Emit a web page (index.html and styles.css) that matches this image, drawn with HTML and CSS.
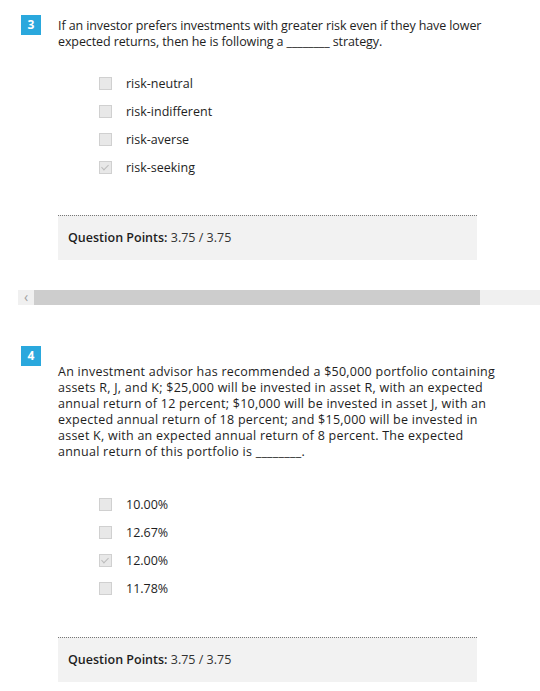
FILE: index.html
```
<!DOCTYPE html>
<html lang="en">
<head>
  <meta charset="UTF-8">
  <meta name="viewport" content="width=device-width, initial-scale=1.0">
  <title>quiz</title>
  <link rel="stylesheet" href="styles.css">
</head>
<body>
  <div class="question q3">
    <div class="q-head">
      <span class="num">3</span>
      <div class="q-text">If an investor prefers investments with greater risk even if they have lower<br>expected returns, then he is following a ________ strategy.</div>
    </div>
    <ul class="answers">
      <li><span class="box"></span>risk-neutral</li>
      <li><span class="box"></span>risk-indifferent</li>
      <li><span class="box"></span>risk-averse</li>
      <li><span class="box checked"></span>risk-seeking</li>
    </ul>
    <div class="points"><b>Question Points:</b> 3.75 / 3.75</div>
  </div>

  <div class="hscroll">
    <span class="arrow">&#8249;</span>
    <span class="thumb"></span>
  </div>

  <div class="question q4">
    <div class="q-head">
      <span class="num">4</span>
    </div>
    <div class="q-text body">An investment advisor has recommended a $50,000 portfolio containing<br>assets R, J, and K; $25,000 will be invested in asset R, with an expected<br>annual return of 12 percent; $10,000 will be invested in asset J, with an<br>expected annual return of 18 percent; and $15,000 will be invested in<br>asset K, with an expected annual return of 8 percent. The expected<br>annual return of this portfolio is ________.</div>
    <ul class="answers">
      <li><span class="box"></span>10.00%</li>
      <li><span class="box"></span>12.67%</li>
      <li><span class="box checked"></span>12.00%</li>
      <li><span class="box"></span>11.78%</li>
    </ul>
    <div class="points"><b>Question Points:</b> 3.75 / 3.75</div>
  </div>
</body>
</html>
```

FILE: styles.css
```
body {
    margin: 0;
    font-family: "Open Sans", sans-serif;
    font-size: 12.5px;
    color: #1e1e1e;
    background: #fff;
}

.question {
    padding-left: 21px;
}
.q3 {
    padding-top: 15px;
}
.q4 {
    padding-top: 41px;
}

.q-head {
    display: flex;
    align-items: flex-start;
}

.num {
    flex: none;
    width: 20px;
    height: 20px;
    line-height: 20px;
    text-align: center;
    background-color: #2aa8dd;
    color: #fff;
    font-weight: bold;
    font-size: 12px;
    margin-right: 17px;
}

.q-text {
    width: 470px;
    line-height: 16px;
    margin-top: 3px;
    letter-spacing: -0.1px;
}
.q-text.body {
    margin-left: 37px;
    margin-top: -2px;
    letter-spacing: 0.25px;
}

.answers {
    list-style: none;
    margin: 0;
    padding: 19px 0 0 78px;
}
.answers li {
    display: flex;
    align-items: center;
    height: 28px;
}
.q4 .answers {
    padding-top: 30px;
}

.box {
    display: inline-block;
    width: 11px;
    height: 11px;
    border: 1px solid #d0d0d0;
    background-color: #e8e8e8;
    margin-right: 14px;
    position: relative;
}
.box.checked::after {
    content: "";
    position: absolute;
    left: 3px;
    top: 1px;
    width: 3px;
    height: 6px;
    border: solid #bcbcbc;
    border-width: 0 1.5px 1.5px 0;
    transform: rotate(45deg);
}

.points {
    width: 409px;
    margin: 34px 0 0 37px;
    padding: 15px 0 15px 10px;
    height: 14px;
    line-height: 14px;
    background-color: #f2f2f2;
    border-top: 1px dotted #777;
    color: #333;
}
.q4 .points {
    margin-top: 35px;
}
.points b {
    font-weight: 600;
    color: #1e1e1e;
}

.hscroll {
    display: flex;
    margin: 30px 0 0 18px;
    height: 15px;
    background-color: #f0f0f0;
}
.arrow {
    width: 16px;
    line-height: 14px;
    text-align: center;
    color: #a0a0a0;
    font-size: 14px;
}
.thumb {
    width: 446px;
    background-color: #cdcdcd;
}
```
